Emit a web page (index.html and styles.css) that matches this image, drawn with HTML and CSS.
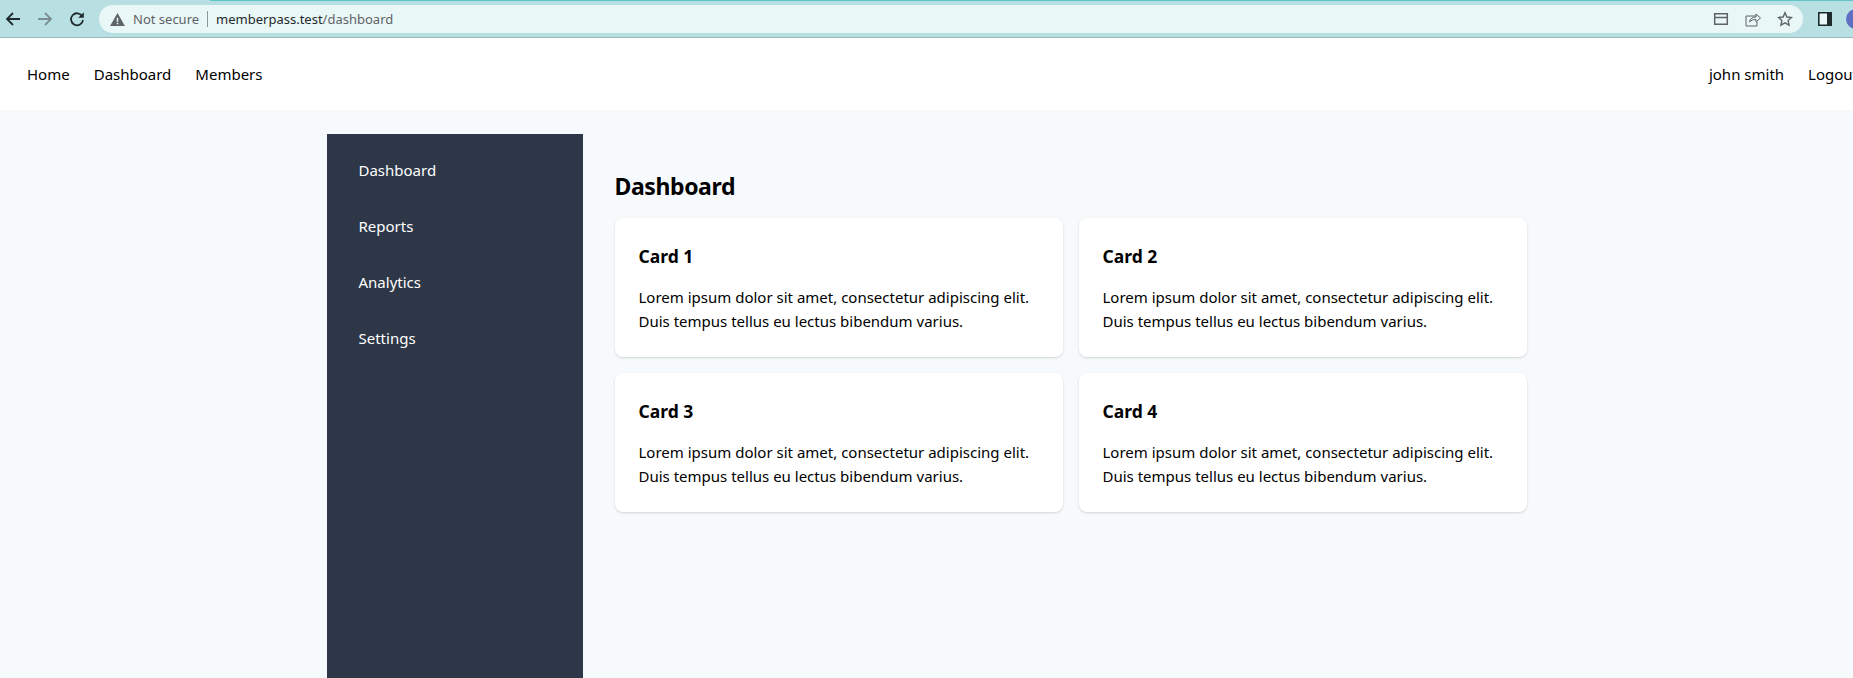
FILE: index.html
```html
<!DOCTYPE html>
<html lang="en">
<head>
    <meta charset="UTF-8">
    <meta name="viewport" content="width=device-width, initial-scale=1.0">
    <title>Dashboard</title>
    <link rel="stylesheet" href="styles.css">
</head>
<body>
    <!-- Browser chrome -->
    <div class="browser-bar">
        <div class="tab-line"></div>
        <div class="browser-row">
            <svg class="tool-icon" viewBox="0 0 16 16"><path d="M15 8H2.500M8 2 2 8l6 6" fill="none" stroke="#1f2a2c" stroke-width="1.800"/></svg>
            <svg class="tool-icon" viewBox="0 0 16 16"><path d="M1 8h12.500M8 2l6 6-6 6" fill="none" stroke="#7b8f93" stroke-width="1.800"/></svg>
            <svg class="tool-icon" viewBox="0 0 16 16"><path d="M13.200 5.200A6 6 0 1 0 14 9" fill="none" stroke="#1f2a2c" stroke-width="1.800"/><path d="M14.800 1.200v5.600H9.200z" fill="#1f2a2c"/></svg>
            <div class="omnibox">
                <svg class="warn-icon" viewBox="0 0 16 14"><path d="M8 0 16 14H0z" fill="#5f6368"/><path d="M7.200 5h1.600v4.400H7.200zM7.200 10.400h1.600V12H7.200z" fill="#e9f7f7"/></svg>
                <span class="not-secure">Not secure</span>
                <span class="omni-sep"></span>
                <span class="url"><b>memberpass.test</b>/dashboard</span>
                <div class="omni-icons">
                    <svg class="omni-icon" viewBox="0 0 16 16"><path d="M1.700 2.700h12.600v10.600H1.700zM1.700 6.500h12.600" fill="none" stroke="#5f6368" stroke-width="1.500"/></svg>
                    <svg class="omni-icon" viewBox="0 0 16 16"><path d="M11 5H1v10h11v-4" fill="none" stroke="#5f6368" stroke-width="1"/><path d="M4.500 11c.5-3 2.500-5 6.500-5V3l4.500 4-4.500 4V8.500c-3 0-5 .7-6.500 2.500z" fill="none" stroke="#5f6368" stroke-width="1"/></svg>
                    <svg class="omni-icon" viewBox="0 0 16 16"><path d="m8 1.800 1.900 4.200 4.600.5-3.400 3.100 1 4.500L8 11.800 3.900 14.100l1-4.500L1.500 6.500l4.600-.5z" fill="none" stroke="#5f6368" stroke-width="1.400"/></svg>
                </div>
            </div>
            <svg class="tool-icon panel-icon" viewBox="0 0 14 14"><path d="M.8.800h12.400v12.400H.8z" fill="#e9f7f7" stroke="#1f2a2c" stroke-width="1.600"/><path d="M9 1h4v12H9z" fill="#1f2a2c"/></svg>
            <span class="avatar"></span>
        </div>
    </div>

    <!-- Top nav -->
    <nav class="topnav">
        <div class="nav-group">
            <a href="#">Home</a>
            <a href="#">Dashboard</a>
            <a href="#">Members</a>
        </div>
        <div class="nav-group nav-user">
            <a href="#">john smith</a>
            <a href="#">Logout</a>
        </div>
    </nav>

    <div class="wrapper">
        <aside class="sidebar">
            <a href="#">Dashboard</a>
            <a href="#">Reports</a>
            <a href="#">Analytics</a>
            <a href="#">Settings</a>
        </aside>
        <main class="content">
            <h1>Dashboard</h1>
            <div class="card-grid">
                <div class="card">
                    <h2>Card 1</h2>
                    <p>Lorem ipsum dolor sit amet, consectetur adipiscing elit. Duis tempus tellus eu lectus bibendum varius.</p>
                </div>
                <div class="card">
                    <h2>Card 2</h2>
                    <p>Lorem ipsum dolor sit amet, consectetur adipiscing elit. Duis tempus tellus eu lectus bibendum varius.</p>
                </div>
                <div class="card">
                    <h2>Card 3</h2>
                    <p>Lorem ipsum dolor sit amet, consectetur adipiscing elit. Duis tempus tellus eu lectus bibendum varius.</p>
                </div>
                <div class="card">
                    <h2>Card 4</h2>
                    <p>Lorem ipsum dolor sit amet, consectetur adipiscing elit. Duis tempus tellus eu lectus bibendum varius.</p>
                </div>
            </div>
        </main>
    </div>
</body>
</html>
```

FILE: styles.css
```css
* {
    box-sizing: border-box;
}

html, body {
    height: 100%;
}

body {
    margin: 0;
    font-family: "Noto Sans", "Open Sans", Arial, sans-serif;
    font-size: 15px;
    background: #f7fafc;
    color: #000;
    display: flex;
    flex-direction: column;
    overflow: hidden;
}

a {
    color: inherit;
    text-decoration: none;
}

/* Browser chrome */
.browser-bar {
    height: 38px;
    flex-shrink: 0;
    background: #b8e0e3;
    border-bottom: 1px solid #9bb8ba;
}

.tab-line {
    height: 1px;
    margin-left: 210px;
    background: #5fc5c9;
}

.browser-row {
    display: flex;
    align-items: center;
    height: 36px;
    padding-left: 5px;
}

.tool-icon {
    width: 16px;
    height: 16px;
    margin-right: 16px;
    flex-shrink: 0;
}

.omnibox {
    display: flex;
    align-items: center;
    flex-shrink: 0;
    width: 1704px;
    height: 28px;
    margin-left: -2px;
    padding: 0 10px 0 11px;
    border-radius: 14px;
    background: #e9f7f7;
    font-size: 13px;
    color: #5f6368;
}

.warn-icon {
    width: 15px;
    height: 13px;
}

.not-secure {
    margin-left: 8px;
}

.omni-sep {
    width: 1px;
    height: 16px;
    margin: 0 8px;
    background: #8a9a9c;
}

.url b {
    font-weight: 400;
    color: #1f2a2c;
}

.omni-icons {
    display: flex;
    gap: 16px;
    margin-left: auto;
}

.omni-icon {
    width: 16px;
    height: 16px;
}

.panel-icon {
    width: 14px;
    height: 14px;
    margin: 0 0 0 15px;
}

.avatar {
    width: 20px;
    height: 20px;
    margin-left: 14px;
    border-radius: 50%;
    background: #5f6fc4;
    flex-shrink: 0;
}

/* Top nav */
.topnav {
    display: flex;
    justify-content: space-between;
    height: 72px;
    flex-shrink: 0;
    padding-left: 27px;
    background: #fff;
}

.nav-group {
    display: flex;
    align-items: center;
    gap: 24px;
}

.nav-user {
    margin-right: -5px;
}

/* Page */
.wrapper {
    display: flex;
    flex: 1;
    width: 1200px;
    margin: 24px auto 0;
}

.sidebar {
    width: 256px;
    flex-shrink: 0;
    padding: 8px 32px;
    background: #2d3748;
    color: #fff;
}

.sidebar a {
    display: block;
    line-height: 24px;
    padding: 16px 0;
}

.content {
    flex: 1;
    padding: 30px 0 0 32px;
}

.content h1 {
    margin: 0 0 10px;
    font-size: 23px;
    letter-spacing: -0.4px;
    line-height: 44px;
    font-weight: 700;
}

.card-grid {
    display: grid;
    grid-template-columns: 1fr 1fr;
    gap: 16px;
}

.card {
    height: 139px;
    padding: 24px;
    border-radius: 8px;
    background: #fff;
    box-shadow: 0 1px 3px rgba(0, 0, 0, 0.1), 0 1px 2px rgba(0, 0, 0, 0.06);
}

.card h2 {
    margin: 0 0 15px;
    font-size: 17.5px;
    line-height: 28px;
    font-weight: 700;
}

.card p {
    margin: 0;
    line-height: 24px;
}
```
